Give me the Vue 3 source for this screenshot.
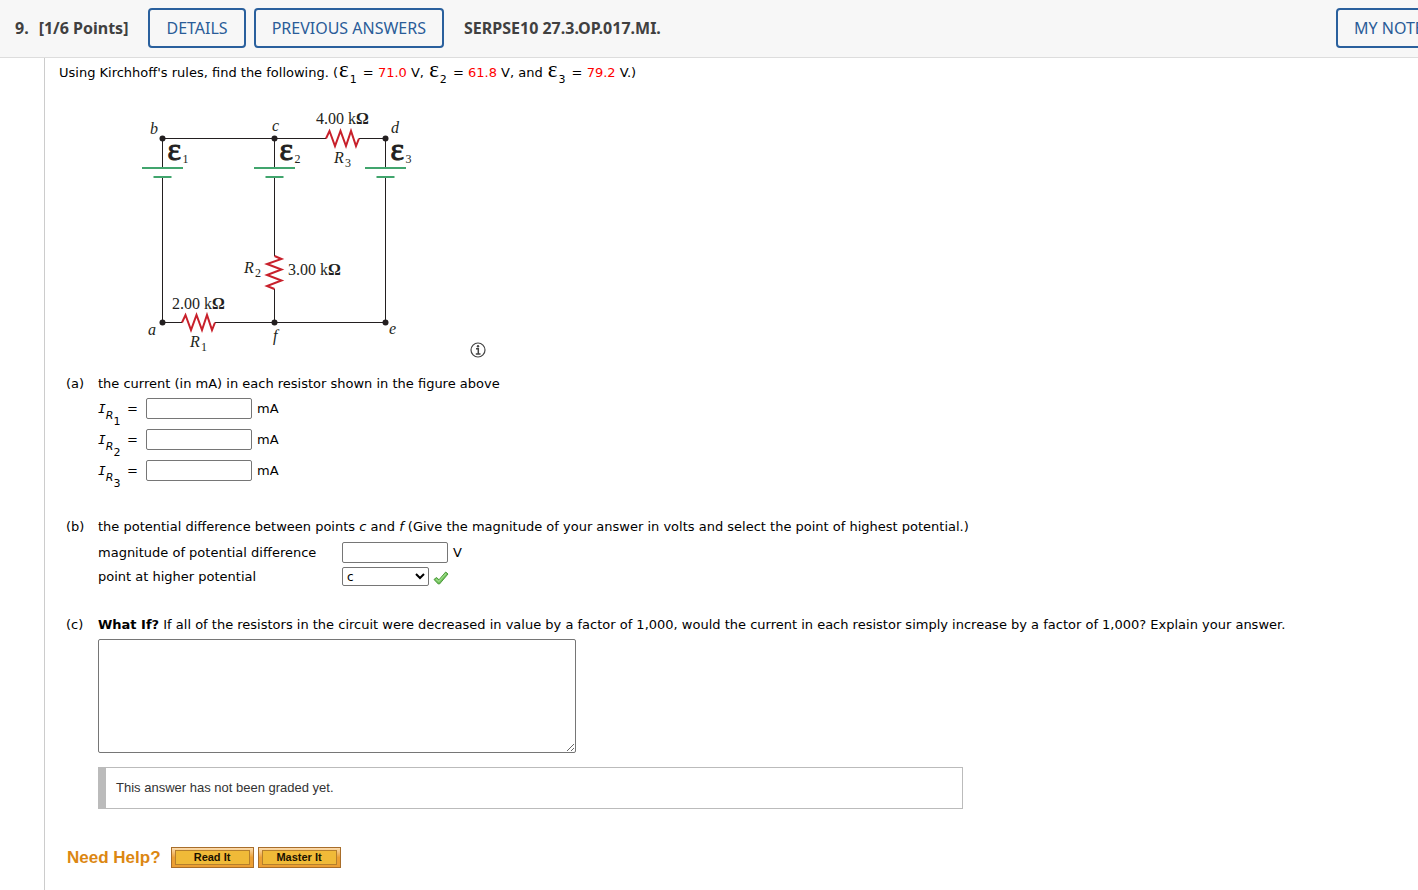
<template>
    <div class="question">
        <header class="question-header">
            <span class="number">9.</span>
            <span class="points">[1/6 Points]</span>
            <button type="button" class="header-btn">DETAILS</button>
            <button type="button" class="header-btn">PREVIOUS ANSWERS</button>
            <h1>SERPSE10 27.3.OP.017.MI.</h1>
            <div class="header-right">
                <button type="button" class="header-btn">MY NOTES</button>
            </div>
        </header>
        <main class="question-body">
            <p class="intro">Using Kirchhoff's rules, find the following. (<template v-for="(e, i) in emfs" :key="i"><span class="emf">ε</span><sub>{{ i + 1 }}</sub> = <span class="value">{{ e.value }}</span> V{{ e.after }}</template></p>
            <div class="figure">
                <svg class="circuit" viewBox="0 0 300 256" role="img" aria-label="Circuit with three batteries and three resistors">
                    <g class="wire">
                        <path d="M32.5 64V34.5H196M229 34.5H255.5V64M144.5 34.5V64" />
                        <path d="M32.5 73V218.5H52M85 218.5H255.5V73" />
                        <path d="M144.5 73V152M144.5 185V218.5" />
                    </g>
                    <g class="plate">
                        <path v-for="x in batteryX" :key="x" :d="`M${x - 20.5} 64H${x + 20.5}M${x - 9} 73H${x + 9}`" />
                    </g>
                    <g class="resistor">
                        <path d="M196 34.5L199.5 27L205 42L210.5 27L216 42L221 27L226 42L229 34.5" />
                        <path d="M52 218.5L55.5 211L61 226L66.5 211L72 226L77 211L82 226L85 218.5" />
                        <path d="M144.5 152L151.5 155L137 160L151.5 165.5L137 171L151.5 176.5L137 182L144.5 185" />
                    </g>
                    <g class="dot">
                        <circle v-for="x in batteryX" :key="'t' + x" :cx="x" cy="34.5" r="3" />
                        <circle v-for="x in batteryX" :key="'b' + x" :cx="x" cy="218.5" r="3" />
                    </g>
                    <text v-for="p in points" :key="p.name" class="italic" :x="p.x" :y="p.y">{{ p.name }}</text>
                    <text v-for="r in resistances" :key="r.value" :x="r.x" :y="r.y">{{ r.value }} k<tspan class="ohm">Ω</tspan></text>
                    <g v-for="r in resistorNames" :key="'r' + r.n">
                        <text class="italic" :x="r.x" :y="r.y">R</text>
                        <text class="index" :x="r.x + 11" :y="r.y + 4">{{ r.n }}</text>
                    </g>
                    <g v-for="(x, i) in batteryX" :key="'e' + x">
                        <text class="big-emf" :x="x + 5" y="56">ε</text>
                        <text class="index" :x="x + 20" y="59">{{ i + 1 }}</text>
                    </g>
                </svg>
                <button type="button" class="info" aria-label="Figure information">
                    <svg viewBox="0 0 16 16">
                        <circle cx="8" cy="8" r="7" fill="none" stroke="#444" stroke-width="1.2" />
                        <circle cx="8" cy="4.3" r="1.2" fill="#444" />
                        <path d="M6 6.7H8.3V11.8M5.8 11.9H10.5" fill="none" stroke="#444" stroke-width="1.5" />
                    </svg>
                </button>
            </div>
            <section class="part part-a">
                <p class="letter">(a)</p>
                <div class="part-content">
                    <p>the current (in mA) in each resistor shown in the figure above</p>
                    <div v-for="n in 3" :key="n" class="current-row">
                        <label :for="'current' + n"><span class="symbol"><i class="current">I</i><sub><i>R</i><sub>{{ n }}</sub></sub></span>=</label>
                        <input :id="'current' + n" v-model="currents[n - 1]" type="text" />
                        <span>mA</span>
                    </div>
                </div>
            </section>
            <section class="part part-b">
                <p class="letter">(b)</p>
                <div class="part-content">
                    <p>the potential difference between points <i>c</i> and <i>f</i> (Give the magnitude of your answer in volts and select the point of highest potential.)</p>
                    <div class="potential-row">
                        <label for="magnitude">magnitude of potential difference</label>
                        <input id="magnitude" v-model="magnitude" type="text" />
                        <span>V</span>
                    </div>
                    <div class="potential-row select-row">
                        <label for="point">point at higher potential</label>
                        <select id="point" v-model="point">
                            <option>c</option>
                            <option>f</option>
                        </select>
                        <svg class="check" viewBox="0 0 16 16" role="img" aria-label="Correct">
                            <path d="M1 9.5L3.5 7.5L6 9.8L12.7 2L15 4L6.5 14H5.3Z" fill="#6fbf5a" stroke="#4c9a3c" stroke-width="1" stroke-linejoin="round" />
                            <path d="M3 9.3L5.8 11.5L13 3.5" fill="none" stroke="#9bdc85" stroke-width="1.2" />
                        </svg>
                    </div>
                </div>
            </section>
            <section class="part part-c">
                <p class="letter">(c)</p>
                <div class="part-content">
                    <p><label for="explanation"><b>What If?</b> If all of the resistors in the circuit were decreased in value by a factor of 1,000, would the current in each resistor simply increase by a factor of 1,000? Explain your answer.</label></p>
                    <textarea id="explanation" v-model="explanation"></textarea>
                    <div class="grade-note">This answer has not been graded yet.</div>
                </div>
            </section>
            <div class="help">
                <h2>Need Help?</h2>
                <button type="button"><span>Read It</span></button>
                <button type="button"><span>Master It</span></button>
            </div>
        </main>
    </div>
</template>

<script setup>
import { ref } from 'vue';

const emfs = [
    { value: '71.0', after: ', ' },
    { value: '61.8', after: ', and ' },
    { value: '79.2', after: '.)' },
];

const batteryX = [32.5, 144.5, 255.5];
const points = [
    { name: 'a', x: 18, y: 231 },
    { name: 'b', x: 20, y: 30 },
    { name: 'c', x: 142, y: 27 },
    { name: 'd', x: 261, y: 29 },
    { name: 'e', x: 259, y: 230 },
    { name: 'f', x: 143, y: 237 },
];
const resistances = [
    { value: '2.00', x: 42, y: 205 },
    { value: '3.00', x: 158, y: 171 },
    { value: '4.00', x: 186, y: 20 },
];
const resistorNames = [
    { n: 1, x: 60, y: 243 },
    { n: 2, x: 114, y: 169 },
    { n: 3, x: 204, y: 59 },
];

const currents = ref(['', '', '']);
const magnitude = ref('');
const point = ref('c');
const explanation = ref('');
</script>

<style>
body{
    margin: 0;
    background: #fff;
}
</style>
<style scoped>
*{
    box-sizing: border-box;
}
.question{
    display: flex;
    flex-direction: column;
    min-height: 100vh;
    overflow: hidden;
    font-family: Verdana, 'DejaVu Sans', sans-serif;
    font-size: 13px;
    line-height: 20px;
    color: #000;
}
.question-header{
    display: flex;
    align-items: center;
    gap: 8px;
    padding: 8px 0 9px 15px;
    border-bottom: 1px solid #ddd;
    background: #f7f7f7;
    font-family: 'Noto Sans', 'Open Sans', sans-serif;
    font-size: 16px;
    color: #404040;
    white-space: nowrap;
}
.number, .points{
    font-weight: 700;
}
.points{
    margin-left: 2px;
    margin-right: 12px;
}
.header-btn{
    flex: none;
    height: 40px;
    padding: 0 16px;
    border: 2px solid #2a609d;
    border-radius: 4px;
    background: transparent;
    font: inherit;
    color: #2a5c98;
    cursor: pointer;
}
h1{
    margin: 0 0 0 12px;
    font-size: 16px;
    font-weight: 700;
}
/* the last button runs past the edge of the window */
.header-right{
    flex: none;
    width: 82px;
    margin-left: auto;
}
.question-body{
    flex: 1;
    margin-left: 44px;
    padding: 0 14px 22px;
    border-left: 1px solid #ccc;
}
p{
    margin: 0;
    padding-top: 2px;
    line-height: 18px;
}
.intro{
    line-height: 26px;
}
sub{
    position: relative;
    top: 6px;
    font-size: 11px;
    line-height: 0;
    vertical-align: baseline;
}
.intro sub{
    margin: 0 2px 0 1px;
}
.emf{
    margin-left: 1px;
    font-family: 'Liberation Serif', serif;
    font-size: 23px;
    line-height: 0;
}
.value{
    color: #f00;
}
.figure{
    display: flex;
    align-items: flex-end;
    padding: 18px 0 0 71px;
}
.circuit{
    width: 300px;
    height: 256px;
    margin-right: 40px;
    font-family: 'Liberation Serif', serif;
    font-size: 16px;
    fill: #231f20;
}
.wire{
    fill: none;
    stroke: #231f20;
    stroke-width: 1;
}
.plate{
    stroke: #41a56d;
    stroke-width: 2;
}
.resistor{
    fill: none;
    stroke: #c8202b;
    stroke-width: 2;
}
.italic{
    font-style: italic;
}
.index{
    font-size: 12px;
}
.ohm{
    font-weight: bold;
}
.big-emf{
    font-size: 32px;
    stroke: #231f20;
    stroke-width: 1;
}
.info{
    width: 16px;
    height: 16px;
    margin-bottom: 2px;
    padding: 0;
    border: 0;
    background: none;
    cursor: pointer;
}
.info svg{
    display: block;
}
.part{
    display: grid;
    grid-template-columns: 32px 1fr;
    padding-left: 7px;
}
.part-a{
    margin-top: 13px;
}
.part-b{
    margin-top: 30px;
}
.part-c{
    margin-top: 26px;
}
.current-row{
    display: flex;
    align-items: center;
    height: 31px;
}
.current-row label{
    display: flex;
    width: 48px;
}
.symbol{
    width: 29px;
}
/* the current symbol needs an I with serifs */
.current{
    font-family: Verdana, 'DejaVu Sans Mono', monospace;
    line-height: 0;
}
input{
    width: 106px;
    height: 21px;
    margin-right: 5px;
    padding: 1px 2px;
    border: 1px solid #767676;
    border-radius: 2px;
    font: inherit;
}
.potential-row{
    display: flex;
    align-items: center;
    height: 25px;
    margin-top: 4px;
}
.potential-row label{
    width: 244px;
}
.select-row{
    height: 23px;
    margin-top: 0;
}
select{
    width: 87px;
    height: 19px;
    padding: 0;
    border: 1px solid #767676;
    border-radius: 2px;
    background: #fff;
    font-family: inherit;
    font-size: 12px;
    color: #000;
}
.check{
    width: 16px;
    height: 16px;
    margin: 3px 0 0 4px;
}
textarea{
    display: block;
    width: 478px;
    max-width: 100%;
    height: 114px;
    margin-top: 5px;
    border: 1px solid #767676;
    border-radius: 2px;
    font: inherit;
}
.grade-note{
    max-width: 865px;
    margin-top: 14px;
    padding: 10px;
    border: 1px solid #bbb;
    border-left-width: 8px;
    font-family: 'Liberation Sans', Arial, sans-serif;
    color: #333;
}
.help{
    display: flex;
    align-items: center;
    gap: 4px;
    margin-top: 38px;
    padding-left: 8px;
    font-family: 'Liberation Sans', Arial, sans-serif;
}
h2{
    margin: 0 6px 0 0;
    font-size: 17px;
    line-height: 20px;
    color: #dc8712;
}
.help button{
    width: 83px;
    height: 21px;
    padding: 2px 3px;
    border: 1px solid #a86d2a;
    background: linear-gradient(#fbdcae, #ec9f33 50%);
    font-family: inherit;
    font-size: 11px;
    font-weight: bold;
    color: #1a1200;
    cursor: pointer;
}
.help button span{
    display: block;
    border: 1px solid #b57f2c;
    background: #f0ba38;
    line-height: 13px;
}
</style>
